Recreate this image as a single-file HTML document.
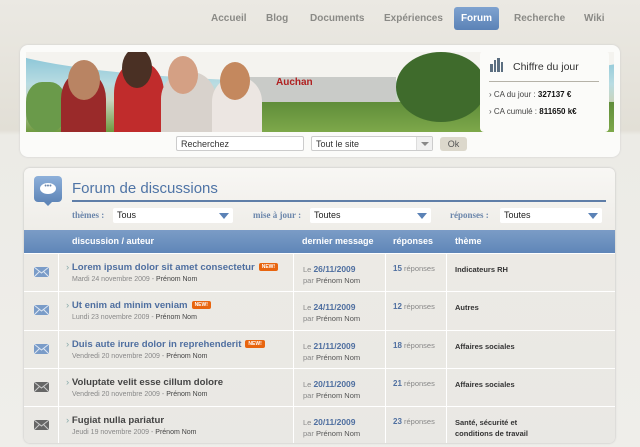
<!DOCTYPE html>
<html><head><meta charset="utf-8"><style>
*{margin:0;padding:0;box-sizing:border-box}
body{width:640px;height:447px;overflow:hidden;font-family:"Liberation Sans",sans-serif;background:linear-gradient(#ebe9e3 0,#e2dfd6 130px,#ecebe6 135px,#efeeea 447px);position:relative}
.a{position:absolute}
.nav{font-size:10px;font-weight:bold;color:#8a8a86;top:13px}
.forum{left:454px;top:7px;width:45px;height:23px;background:linear-gradient(#7fa3d0,#5b82b6);border-radius:3px;color:#fff;font-size:10px;font-weight:bold;text-align:center;line-height:23px}
.hdr{left:20px;top:45px;width:600px;height:112px;background:#fbfbf9;border-radius:8px;box-shadow:0 0 2px #ccc}
.ban{left:26px;top:52px;width:588px;height:80px;overflow:hidden;background:linear-gradient(#85c3d6,#b9dce2 40%,#c8d5c0 60%,#6f9a3f)}
.inp{background:#fff;border:1px solid #ccc;border-radius:2px;font-size:9px;color:#333;padding:2px 4px;height:15px}
.panel{left:24px;top:168px;width:591px;height:275px;background:linear-gradient(#f8f7f4,#eceae5 80px,#e9e8e4);border-radius:6px;box-shadow:0 0 2px #bbb;overflow:hidden}
.lbl{font-family:"Liberation Serif",serif;font-size:9px;font-weight:bold;color:#6b86ab;top:210px}
.sel{top:208px;height:15px;background:#fff;border-radius:2px;font-size:9px;color:#222;padding:2px 4px}
.tri{position:absolute;right:4px;top:5px;border-left:5px solid transparent;border-right:5px solid transparent;border-top:6px solid #5b82b6}
.th{top:230px;left:24px;width:591px;height:23px;background:linear-gradient(#7b9cc6,#5f86b8)}
.th span{position:absolute;top:6px;color:#fff;font-size:9px;font-weight:bold}
.row{left:24px;width:591px;border-top:1px solid #fff;height:38px}
.row .t{position:absolute;left:42px;top:8px;font-size:9.6px;color:#4f6fa0;font-weight:bold;white-space:nowrap}
.row .d{position:absolute;left:48px;top:22px;font-size:7px;color:#888}
.row .d b{color:#444;font-weight:normal}
.row .m{position:absolute;left:279px;top:10px;font-size:7.5px;color:#888;line-height:11px}
.row .m b{color:#4f6fa0;font-size:8.5px}
.row .m i{font-style:normal;color:#555}
.row .r{position:absolute;left:369px;top:10px;font-size:7.5px;color:#888}
.row .r b{color:#4f6fa0;font-size:8px}
.row .th2{position:absolute;left:431px;top:10px;font-size:7.5px;color:#333;font-weight:bold;line-height:11px}
.new{display:inline-block;background:#e8650f;color:#fff;font-size:5px;border-radius:2px;padding:1px 3px;vertical-align:middle;margin-left:4px}
.env{position:absolute;left:10px;top:13px;width:15px;height:10px}
.vl{position:absolute;top:253px;height:190px;width:1px;background:#fff}
</style></head><body>
<div class="a nav" style="left:211px">Accueil</div>
<div class="a nav" style="left:266px">Blog</div>
<div class="a nav" style="left:310px">Documents</div>
<div class="a nav" style="left:384px">Expériences</div>
<div class="a forum">Forum</div>
<div class="a nav" style="left:514px">Recherche</div>
<div class="a nav" style="left:584px">Wiki</div>

<div class="a hdr"></div>
<div class="a ban">
 <div class="a" style="left:-40px;top:-60px;width:700px;height:90px;border-radius:50%;background:#f4f3ef"></div>
 <div class="a" style="left:200px;top:25px;width:170px;height:40px;background:#c9cbc8"></div>
 <div class="a" style="left:250px;top:25px;font-size:10px;color:#b02020;font-weight:bold">Auchan</div>
 <div class="a" style="left:180px;top:50px;width:420px;height:30px;background:linear-gradient(#5f8d3a,#7da84a)"></div>
 <div class="a" style="left:370px;top:0;width:90px;height:70px;border-radius:50%;background:#3f6b2c"></div>
 <div class="a" style="left:0;top:30px;width:40px;height:50px;border-radius:40%;background:#6a9a4a"></div>
 <div class="a" style="left:35px;top:20px;width:45px;height:60px;border-radius:45% 45% 0 0;background:#9a2a2a"></div>
 <div class="a" style="left:42px;top:8px;width:32px;height:40px;border-radius:50%;background:#b98463"></div>
 <div class="a" style="left:88px;top:10px;width:50px;height:70px;border-radius:45% 45% 0 0;background:#c02c2c"></div>
 <div class="a" style="left:96px;top:-4px;width:30px;height:40px;border-radius:50%;background:#4a3024"></div>
 <div class="a" style="left:135px;top:20px;width:55px;height:60px;border-radius:45% 45% 0 0;background:#d8d2cc"></div>
 <div class="a" style="left:142px;top:4px;width:30px;height:38px;border-radius:50%;background:#d4a084"></div>
 <div class="a" style="left:186px;top:25px;width:50px;height:55px;border-radius:45% 45% 0 0;background:#ece6e2"></div>
 <div class="a" style="left:194px;top:10px;width:30px;height:38px;border-radius:50%;background:#c4885e"></div>
</div>
<div class="a" style="left:480px;top:51px;width:129px;height:81px;background:#fbfbf9;border-radius:4px"></div>
<div class="a" style="left:489px;top:57px;width:16px;height:16px"><svg width="16" height="16" viewBox="0 0 16 16"><rect x="1" y="7" width="3" height="8" fill="#5b6e80"/><rect x="5" y="3" width="2" height="12" fill="#5b6e80"/><rect x="8" y="1" width="3" height="14" fill="#5b6e80"/><rect x="12" y="5" width="2" height="10" fill="#5b6e80"/></svg></div>
<div class="a" style="left:513px;top:61px;font-size:10.5px;color:#333">Chiffre du jour</div>
<div class="a" style="left:489px;top:81px;width:110px;height:1px;background:#b5b2a8"></div>
<div class="a" style="left:489px;top:90px;font-size:8px;color:#444">› CA du jour : <b style="color:#111">327137 €</b></div>
<div class="a" style="left:489px;top:107px;font-size:8px;color:#444">› CA cumulé : <b style="color:#111">811650 k€</b></div>
<div class="a inp" style="left:176px;top:136px;width:128px">Recherchez</div>
<div class="a inp" style="left:311px;top:136px;width:122px">Tout le site<span style="position:absolute;right:0;top:0;width:16px;height:13px;border-left:1px solid #ddd;background:#f0f0f0"><span style="position:absolute;left:4px;top:5px;border-left:4px solid transparent;border-right:4px solid transparent;border-top:4px solid #888"></span></span></div>
<div class="a" style="left:440px;top:137px;width:27px;height:14px;background:#dcd8cc;border-radius:3px;font-size:9px;color:#555;text-align:center;line-height:14px">Ok</div>

<div class="a panel"></div>
<div class="a" style="left:34px;top:176px;width:28px;height:26px;background:linear-gradient(#8eb0da,#5f86b8);border-radius:4px"></div>
<div class="a" style="left:43px;top:201px;border-left:5px solid transparent;border-right:5px solid transparent;border-top:5px solid #5f86b8"></div>
<div class="a" style="left:40px;top:183px;width:16px;height:11px;background:#fff;border-radius:50%;font-size:7px;color:#6b86ab;text-align:center;line-height:7px">•••</div>
<div class="a" style="left:72px;top:180px;font-size:15px;color:#4f74a6">Forum de discussions</div>
<div class="a" style="left:72px;top:200px;width:534px;height:2px;background:#5f7ea8"></div>
<div class="a lbl" style="left:72px">thèmes :</div>
<div class="a sel" style="left:113px;width:120px">Tous<span class="tri"></span></div>
<div class="a lbl" style="left:253px">mise à jour :</div>
<div class="a sel" style="left:310px;width:121px">Toutes<span class="tri"></span></div>
<div class="a lbl" style="left:450px">réponses :</div>
<div class="a sel" style="left:500px;width:102px">Toutes<span class="tri"></span></div>

<div class="a th"><span style="left:48px">discussion / auteur</span><span style="left:278px">dernier message</span><span style="left:369px">réponses</span><span style="left:431px">thème</span></div>

<div class="a row" style="top:253px"><svg class="env" viewBox="0 0 15 10"><rect width="15" height="10" fill="#7a9cc8"/><path d="M0 0L7.5 6L15 0M0 10L5.5 4.5M15 10L9.5 4.5" stroke="#dfe8f3" fill="none"/></svg><div class="t"><span style="color:#8aa;font-weight:normal">› </span>Lorem ipsum dolor sit amet consectetur<span class="new">NEW!</span></div><div class="d">Mardi 24 novembre 2009 - <b>Prénom Nom</b></div><div class="m">Le <b>26/11/2009</b><br>par <i>Prénom Nom</i></div><div class="r"><b>15</b> réponses</div><div class="th2">Indicateurs RH</div></div>
<div class="a row" style="top:291px"><svg class="env" viewBox="0 0 15 10"><rect width="15" height="10" fill="#7a9cc8"/><path d="M0 0L7.5 6L15 0M0 10L5.5 4.5M15 10L9.5 4.5" stroke="#dfe8f3" fill="none"/></svg><div class="t"><span style="color:#8aa;font-weight:normal">› </span>Ut enim ad minim veniam<span class="new">NEW!</span></div><div class="d">Lundi 23 novembre 2009 - <b>Prénom Nom</b></div><div class="m">Le <b>24/11/2009</b><br>par <i>Prénom Nom</i></div><div class="r"><b>12</b> réponses</div><div class="th2">Autres</div></div>
<div class="a row" style="top:330px"><svg class="env" viewBox="0 0 15 10"><rect width="15" height="10" fill="#7a9cc8"/><path d="M0 0L7.5 6L15 0M0 10L5.5 4.5M15 10L9.5 4.5" stroke="#dfe8f3" fill="none"/></svg><div class="t"><span style="color:#8aa;font-weight:normal">› </span>Duis aute irure dolor in reprehenderit<span class="new">NEW!</span></div><div class="d">Vendredi 20 novembre 2009 - <b>Prénom Nom</b></div><div class="m">Le <b>21/11/2009</b><br>par <i>Prénom Nom</i></div><div class="r"><b>18</b> réponses</div><div class="th2">Affaires sociales</div></div>
<div class="a row" style="top:368px"><svg class="env" viewBox="0 0 15 10"><rect width="15" height="10" fill="#666"/><path d="M0 0L7.5 6L15 0M0 10L5.5 4.5M15 10L9.5 4.5" stroke="#ccc" fill="none"/></svg><div class="t" style="color:#444"><span style="color:#8aa;font-weight:normal">› </span>Voluptate velit esse cillum dolore</div><div class="d">Vendredi 20 novembre 2009 - <b>Prénom Nom</b></div><div class="m">Le <b>20/11/2009</b><br>par <i>Prénom Nom</i></div><div class="r"><b>21</b> réponses</div><div class="th2">Affaires sociales</div></div>
<div class="a row" style="top:406px"><svg class="env" viewBox="0 0 15 10"><rect width="15" height="10" fill="#666"/><path d="M0 0L7.5 6L15 0M0 10L5.5 4.5M15 10L9.5 4.5" stroke="#ccc" fill="none"/></svg><div class="t" style="color:#444"><span style="color:#8aa;font-weight:normal">› </span>Fugiat nulla pariatur</div><div class="d">Jeudi 19 novembre 2009 - <b>Prénom Nom</b></div><div class="m">Le <b>20/11/2009</b><br>par <i>Prénom Nom</i></div><div class="r"><b>23</b> réponses</div><div class="th2">Santé, sécurité et<br>conditions de travail</div></div>
<div class="vl" style="left:58px"></div><div class="vl" style="left:293px"></div><div class="vl" style="left:385px"></div><div class="vl" style="left:446px"></div>
</body></html>
